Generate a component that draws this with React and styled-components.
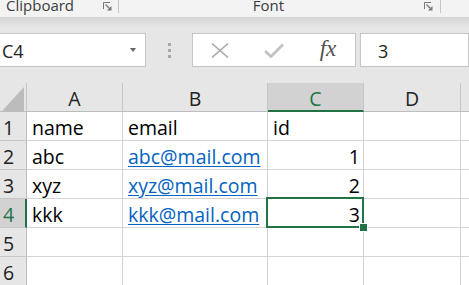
import React from 'react';
import styled, { createGlobalStyle } from 'styled-components';

// spreadsheet window crop: ribbon labels, formula bar, grid

const GREEN = '#217346';

const Global = createGlobalStyle`
  html, body {
    margin: 0;
    padding: 0;
    background: #fff;
    overflow: hidden;
  }
  body {
    font-family: "Open Sans", "Liberation Sans", sans-serif;
    color: #000;
  }
`;

const Page = styled.div`
  width: 469px;
  height: 285px;
  display: flex;
  flex-direction: column;
  overflow: hidden;
  background: #e6e6e6;
`;

const Ribbon = styled.div`
  height: 17px;
  display: flex;
  background: #f3f3f3;
  flex-shrink: 0;
`;

const Group = styled.div`
  width: ${p => p.width}px;
  display: flex;
  align-items: flex-start;
  position: relative;
  flex-shrink: 0;
  &::after {
    content: '';
    width: 1px;
    height: 13px;
    background: #c6c6c6;
  }
`;

const GroupLabel = styled.div`
  flex: 1;
  font-size: 15px;
  line-height: 10px;
  height: 17px;
  color: #3c3c3c;
  text-align: ${p => (p.left ? 'left' : 'center')};
  padding-left: ${p => (p.left ? 6 : 0)}px;
  overflow: hidden;
`;

const Launcher = styled.svg`
  width: 9px;
  height: 9px;
  margin: 2px ${p => p.gap}px 0 6px;
  flex-shrink: 0;
`;

const Shade = styled.div`
  height: 10px;
  flex-shrink: 0;
  background: linear-gradient(#d3d3d3, #e6e6e6);
`;

const FormulaBar = styled.div`
  display: flex;
  align-items: stretch;
  height: 34px;
  margin-top: 6px;
  margin-bottom: 16px;
  flex-shrink: 0;
`;

const Box = styled.div`
  box-sizing: border-box;
  background: #fff;
  border: 1px solid #c6c6c6;
  ${p => p.noLeft && 'border-left: none;'}
  width: ${p => (p.width ? `${p.width}px` : 'auto')};
  flex: ${p => (p.width ? 'none' : 1)};
  display: flex;
  align-items: center;
  font-size: 18px;
  color: #222;
`;

const NameText = styled.span`
  flex: 1;
  padding-left: 2px;
  padding-top: 1px;
`;

const DropArrow = styled.span`
  width: 0;
  height: 0;
  border-left: 3.5px solid transparent;
  border-right: 3.5px solid transparent;
  border-top: 4px solid #666;
  margin-right: 9px;
`;

const Dots = styled.div`
  width: 46px;
  display: flex;
  flex-direction: column;
  align-items: center;
  justify-content: center;
  gap: 3px;
  & > span {
    width: 3px;
    height: 3px;
    background: #a8a8a8;
  }
`;

const Gap = styled.div`
  width: ${p => p.w}px;
`;

const Tool = styled.div`
  width: 54px;
  display: flex;
  align-items: center;
  justify-content: center;
`;

const Fx = styled.span`
  font-family: "Liberation Serif", "DejaVu Serif", serif;
  font-style: italic;
  font-size: 23px;
  color: #505050;
  padding-bottom: 3px;
`;

const ValueText = styled.span`
  padding-left: 17px;
  padding-top: 1px;
`;

const Grid = styled.div`
  display: grid;
  grid-template-columns: 27px 96px 145px 96px 97px 1fr;
  grid-template-rows: repeat(7, 29px);
  background: #fff;
  font-size: 19.5px;
  line-height: 1.2;
`;

const Corner = styled.div`
  box-sizing: border-box;
  background: #e6e6e6;
  border-right: 1px solid #c6c6c6;
  border-bottom: 1px solid #bdbdbd;
  display: flex;
  align-items: flex-end;
  padding: 0 2px 0 2px;
  &::before {
    content: '';
    width: 22px;
    height: 24px;
    background: #bcbcbc;
    clip-path: polygon(100% 0, 100% 100%, 0 100%);
  }
`;

const ColHead = styled.div`
  box-sizing: border-box;
  background: ${p => (p.active ? '#d2d2d2' : '#e6e6e6')};
  border-right: 1px solid #c6c6c6;
  border-bottom: ${p => (p.active ? `2px solid ${GREEN}` : '1px solid #bdbdbd')};
  color: ${p => (p.active ? GREEN : '#222')};
  display: flex;
  align-items: flex-end;
  justify-content: center;
  padding-bottom: ${p => (p.active ? 0 : 1)}px;
`;

const RowHead = styled.div`
  box-sizing: border-box;
  background: ${p => (p.active ? '#d2d2d2' : '#e6e6e6')};
  border-bottom: 1px solid #c6c6c6;
  border-right: ${p => (p.active ? `2px solid ${GREEN}` : '1px solid #bdbdbd')};
  color: ${p => (p.active ? GREEN : '#222')};
  display: flex;
  align-items: flex-end;
  padding: 0 0 1px 3px;
`;

const Cell = styled.div`
  box-sizing: border-box;
  border-right: 1px solid #d4d4d4;
  border-bottom: 1px solid #d4d4d4;
  display: flex;
  align-items: flex-end;
  justify-content: ${p => (p.num ? 'flex-end' : 'flex-start')};
  padding: 0 3px 1px 5px;
  white-space: nowrap;
  position: relative;
  z-index: ${p => (p.selected ? 2 : 0)};
  ${p =>
    p.selected &&
    `
    &::after {
      content: '';
      position: absolute;
      top: -2px;
      left: -2px;
      right: -1px;
      bottom: -1px;
      border: 2px solid ${GREEN};
    }
    &::before {
      content: '';
      position: absolute;
      right: -4px;
      bottom: -4px;
      width: 7px;
      height: 7px;
      background: ${GREEN};
      box-shadow: 0 0 0 1px #fff;
      z-index: 1;
    }
  `}
`;

const Link = styled.span`
  color: #0563c1;
  text-decoration: underline;
  text-underline-offset: 2px;
`;

const cols = ['A', 'B', 'C', 'D', ''];

const rows = [
  ['name', 'email', 'id'],
  ['abc', 'abc@mail.com', 1],
  ['xyz', 'xyz@mail.com', 2],
  ['kkk', 'kkk@mail.com', 3],
  [],
  [],
];

const LauncherIcon = ({ gap }) => (
  <Launcher gap={gap} viewBox="0 0 9 9">
    <path d="M0.5 7 V0.5 H7" fill="none" stroke="#777" strokeWidth="1" />
    <path d="M2.5 2.5 L6.5 6.5" stroke="#777" strokeWidth="1.2" />
    <path d="M8.5 4 V8.5 H4 Z" fill="#777" />
  </Launcher>
);

export default function App() {
  return (
    <Page>
      <Global />
      <Ribbon>
        <Group width={119}>
          <GroupLabel left>Clipboard</GroupLabel>
          <LauncherIcon gap={6} />
        </Group>
        <Group width={322}>
          <GroupLabel>Font</GroupLabel>
          <LauncherIcon gap={7} />
        </Group>
      </Ribbon>
      <Shade />
      <FormulaBar>
        <Box width={146} noLeft>
          <NameText>C4</NameText>
          <DropArrow />
        </Box>
        <Dots>
          <span />
          <span />
          <span />
        </Dots>
        <Box width={164}>
          <Tool>
            <svg width="18" height="15" viewBox="0 0 18 15">
              <path d="M1 0.5 L17 14.5 M17 0.5 L1 14.5" stroke="#ababab" strokeWidth="1.6" />
            </svg>
          </Tool>
          <Tool>
            <svg width="20" height="15" viewBox="0 0 20 15">
              <path d="M1 8 L7 13.5 L19 1.5" fill="none" stroke="#c4c4c4" strokeWidth="3" />
            </svg>
          </Tool>
          <Tool>
            <Fx>fx</Fx>
          </Tool>
        </Box>
        <Gap w={4} />
        <Box noLeft={false}>
          <ValueText>3</ValueText>
        </Box>
      </FormulaBar>
      <Grid>
        <Corner />
        {cols.map((c, i) => (
          <ColHead key={i} active={c === 'C'}>
            {c}
          </ColHead>
        ))}
        {rows.map((r, ri) => (
          <React.Fragment key={ri}>
            <RowHead active={ri === 3}>{ri + 1}</RowHead>
            {cols.map((_, ci) => {
              const v = r[ci];
              const isNum = typeof v === 'number';
              return (
                <Cell key={ci} num={isNum} selected={ri === 3 && ci === 2}>
                  {ci === 1 && ri > 0 && v ? <Link>{v}</Link> : v}
                </Cell>
              );
            })}
          </React.Fragment>
        ))}
      </Grid>
    </Page>
  );
}
